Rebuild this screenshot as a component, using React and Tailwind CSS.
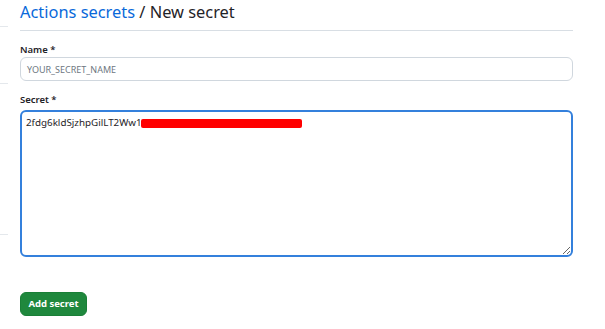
import React from "react";

export default function App() {
  const font = { fontFamily: '"Noto Sans", "Open Sans", Arial, sans-serif' };
  return (
    <div className="flex w-[605px] h-[329px] bg-white overflow-hidden" style={font}>
      {/* sidebar separators (partially visible) */}
      <div className="flex flex-col w-[8px] shrink-0">
        <div className="mt-[26px] h-px bg-[#e4e8ec]" />
        <div className="mt-[56px] h-px bg-[#e4e8ec]" />
        <div className="mt-[150px] h-px bg-[#e4e8ec]" />
      </div>
      <div className="ml-[12px] w-[553px] flex flex-col">
        <div className="h-[31px] border-b border-[#d8dee4] flex items-start">
          <h1 className="text-[16.4px] leading-[24px] font-normal text-[#1f2328] whitespace-nowrap">
            <span className="text-[#0969da]">Actions secrets</span> / New secret
          </h1>
        </div>
        <label className="mt-[13px] text-[9.5px] leading-[12px] font-semibold text-[#1f2328]">
          Name *
        </label>
        <div className="mt-[1px] h-[24px] rounded-[6px] border border-[#d0d7de] bg-white flex items-center px-[6px]">
          <span className="text-[9px] text-[#6e7781] leading-none pt-[1px]">YOUR_SECRET_NAME</span>
        </div>
        <label className="mt-[13px] text-[9.5px] leading-[12px] font-semibold text-[#1f2328]">
          Secret *
        </label>
        <div className="relative mt-[4px]">
          <textarea
            readOnly
            defaultValue="2fdg6kldSjzhpGilLT2Ww1xxxxxxxxxxxxxxxxxxxxxxxxx"
            className="block w-full h-[147px] rounded-[6px] border-2 border-[#3480dc] outline-none px-[4px] py-[4px] text-[9.8px] leading-[14px] text-[#1f2328] resize-y bg-white"
            style={font}
          />
          <div className="absolute left-[121px] top-[9px] w-[161px] h-[9px] bg-[#ff0000] rounded-[2px]" />
        </div>
        <div className="mt-[35px]">
          <button className="h-[24px] w-[67px] rounded-[6px] bg-[#1f883d] border border-[#1a7f37] text-white text-[9.5px] font-bold leading-none flex items-center justify-center">
            Add secret
          </button>
        </div>
      </div>
    </div>
  );
}
